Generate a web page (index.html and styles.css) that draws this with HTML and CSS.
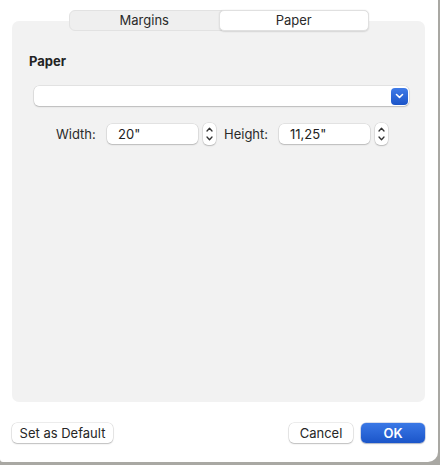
FILE: index.html
```html
<!DOCTYPE html>
<html>
<head>
<meta charset="utf-8">
<link rel="stylesheet" href="styles.css">
</head>
<body>
<div class="window">
  <div class="tabs">
    <div class="tab">Margins</div>
    <div class="tab active">Paper</div>
  </div>
  <div class="panel">
    <div class="section-title">Paper</div>
    <div class="popup">
      <span class="popup-btn">
        <svg width="9" height="6" viewBox="0 0 9 6"><path d="M1.5 1.5 L4.5 4.3 L7.5 1.5" fill="none" stroke="#fff" stroke-width="1.6" stroke-linecap="round" stroke-linejoin="round"/></svg>
      </span>
    </div>
    <div class="size-row">
      <span class="lbl lbl-w">Width:</span>
      <div class="field">20"</div>
      <div class="stepper">
        <svg width="13" height="22" viewBox="0 0 13 22"><path d="M4 8 L6.5 5.3 L9 8" fill="none" stroke="#333" stroke-width="1.3" stroke-linecap="round" stroke-linejoin="round"/><path d="M4 14 L6.5 16.7 L9 14" fill="none" stroke="#333" stroke-width="1.3" stroke-linecap="round" stroke-linejoin="round"/></svg>
      </div>
      <span class="lbl lbl-h">Height:</span>
      <div class="field">11,25"</div>
      <div class="stepper">
        <svg width="13" height="22" viewBox="0 0 13 22"><path d="M4 8 L6.5 5.3 L9 8" fill="none" stroke="#333" stroke-width="1.3" stroke-linecap="round" stroke-linejoin="round"/><path d="M4 14 L6.5 16.7 L9 14" fill="none" stroke="#333" stroke-width="1.3" stroke-linecap="round" stroke-linejoin="round"/></svg>
      </div>
    </div>
  </div>
  <div class="footer">
    <button class="btn btn-default">Set as Default</button>
    <div class="spacer"></div>
    <button class="btn btn-cancel">Cancel</button>
    <button class="btn btn-ok">OK</button>
  </div>
</div>
</body>
</html>
```
FILE: styles.css
```css
* { box-sizing: border-box; }
html, body { margin: 0; padding: 0; }
body {
  width: 440px;
  height: 465px;
  background: #a9a8a3;
  font-family: Inter, "Liberation Sans", sans-serif;
  font-size: 13px;
  color: #262626;
  overflow: hidden;
}
.window {
  width: 438px;
  height: 462px;
  background: #ffffff;
  border-bottom-right-radius: 10px;
  border-bottom-left-radius: 3px;
  padding: 10px 13px 0 12px;
  display: flex;
  flex-direction: column;
}
.tabs {
  position: relative;
  z-index: 1;
  align-self: center;
  margin-left: 1px;
  width: 300px;
  height: 21px;
  background: #efefef;
  border: 1px solid #e2e2e2;
  border-radius: 6px;
  display: flex;
}
.tab {
  flex: 1;
  display: flex;
  align-items: center;
  justify-content: center;
  font-size: 13px;
  color: #2a2a2a;
  line-height: 1;
}
.tab.active {
  background: #ffffff;
  border-radius: 5px;
  margin: -1px -1px -1px 0;
  border: 1px solid #e0e0e0;
  box-shadow: 0 0.5px 1.5px rgba(0,0,0,0.12);
}
.panel {
  margin-top: -10px;
  height: 381px;
  background: #f2f2f2;
  border-radius: 7px;
  padding: 32px 16px 0 17px;
  display: flex;
  flex-direction: column;
}
.section-title {
  font-weight: 700;
  font-size: 13px;
  line-height: 16px;
  color: #232323;
}
.popup {
  margin: 17px 0 0 5px;
  height: 20px;
  background: #ffffff;
  border-radius: 5px;
  box-shadow: 0 0 0 0.5px rgba(0,0,0,0.12), 0 1px 1.5px rgba(0,0,0,0.18);
  display: flex;
  align-items: center;
  justify-content: flex-end;
  padding-right: 1px;
}
.popup-btn {
  width: 17px;
  height: 17px;
  border-radius: 4px;
  background: linear-gradient(#3f7be8, #1b54c8);
  display: flex;
  align-items: center;
  justify-content: center;
}
.size-row {
  margin-top: 17px;
  display: flex;
  align-items: center;
  height: 22px;
  padding-left: 27px;
}
.lbl {
  font-size: 13px;
  color: #2a2a2a;
}
.lbl-w { width: 51px; }
.lbl-h { width: 55px; }
.field {
  width: 91px;
  height: 20px;
  background: #ffffff;
  border-radius: 5px;
  box-shadow: 0 0 0 0.5px rgba(0,0,0,0.12), 0 1px 1.5px rgba(0,0,0,0.18);
  padding-left: 11px;
  display: flex;
  align-items: center;
  font-size: 13px;
  color: #222;
}
.stepper {
  margin-left: 5px;
  margin-right: 8px;
  width: 13px;
  height: 22px;
  background: #ffffff;
  border-radius: 5px;
  box-shadow: 0 0 0 0.5px rgba(0,0,0,0.12), 0 1px 1.5px rgba(0,0,0,0.18);
  display: flex;
}
.footer {
  margin-top: 21px;
  display: flex;
  align-items: center;
  height: 20px;
}
.spacer { flex: 1; }
.btn {
  font-family: Inter, "Liberation Sans", sans-serif;
  font-size: 13px;
  height: 20px;
  border: none;
  border-radius: 5px;
  background: #ffffff;
  color: #262626;
  box-shadow: 0 0 0 0.5px rgba(0,0,0,0.14), 0 1px 1.5px rgba(0,0,0,0.2);
  padding: 0;
  line-height: 20px;
}
.btn-default { width: 101px; }
.btn-cancel { width: 64px; margin-right: 8px; }
.btn-ok {
  width: 64px;
  background: linear-gradient(#3a78e6, #1b55c9);
  color: #ffffff;
  font-weight: 600;
  box-shadow: 0 0 0 0.5px rgba(0,40,140,0.3), 0 1px 1.5px rgba(0,0,0,0.2);
}
```
